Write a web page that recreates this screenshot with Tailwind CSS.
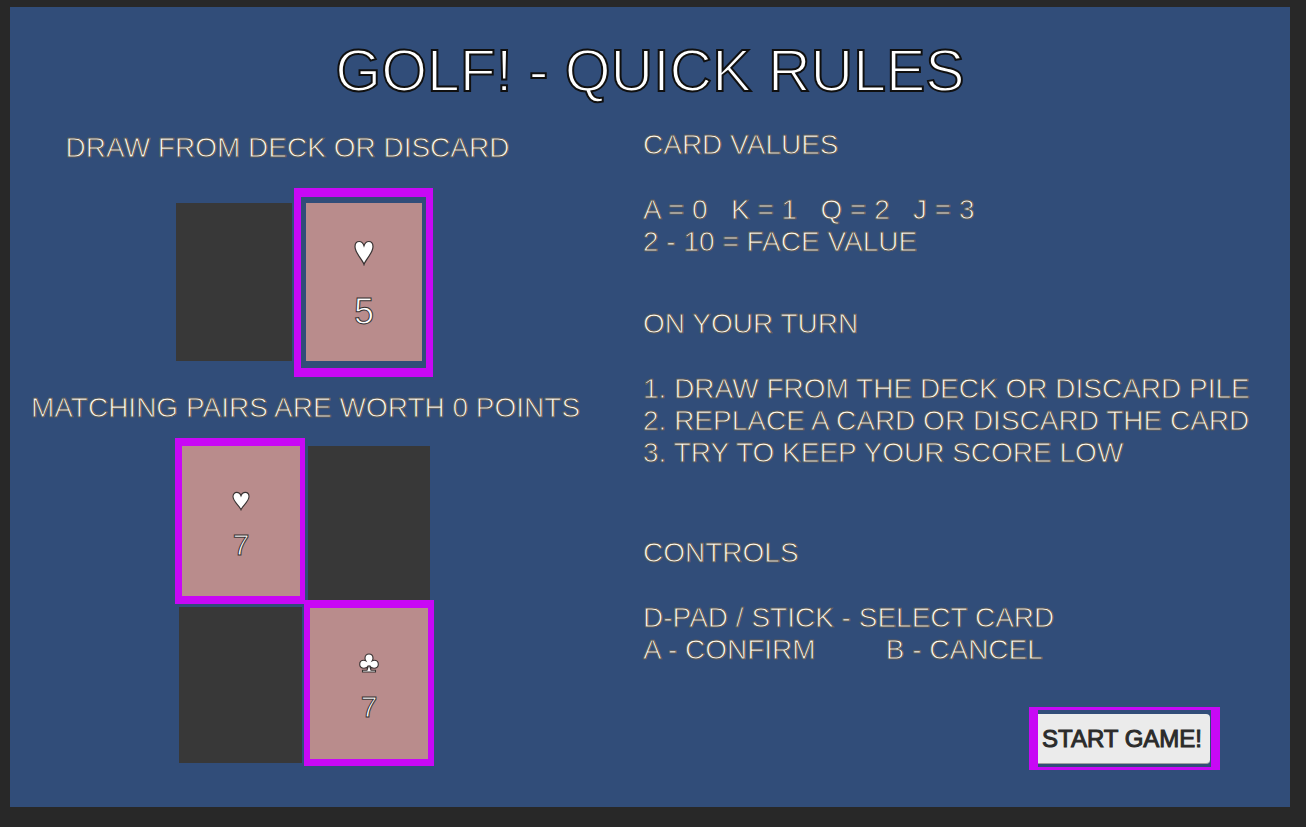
<!DOCTYPE html>
<html lang="en">
<head>
<meta charset="utf-8">
<meta name="viewport" content="width=device-width, initial-scale=1">
<title>Golf! - Quick Rules</title>
<script src="https://cdn.jsdelivr.net/npm/@tailwindcss/browser@4"></script>
</head>
<body class="flex min-h-screen flex-col bg-[#282828] pt-[7px] pr-4 pb-5 pl-[10px] font-['Liberation_Sans',Arial,sans-serif]">
<main class="flex grow flex-col bg-[#314d79] pt-8 text-[28px] leading-8 text-[#fffaf0] [-webkit-text-stroke:1px_#5c5a58]">
  <h1 class="text-center text-[59px] leading-16 text-white [-webkit-text-stroke:2px_#101010]">GOLF! - QUICK RULES</h1>
  <div class="grid grid-cols-[591fr_647fr] gap-x-[42px] pt-[26px]">
    <div class="flex flex-col items-center pt-[3px]">
      <h2 class="pr-9 whitespace-nowrap">DRAW FROM DECK OR DISCARD</h2>
      <div class="mt-6 flex items-start gap-[2px] pr-[2px]">
        <div class="mt-[15px] h-[158px] w-[116px] bg-[#383838]"></div>
        <div class="border-x-7 border-y-9 border-[#c808f5] pt-[6px] pr-1 pb-[7px] pl-[5px]">
          <div class="flex h-[158px] w-[116px] flex-col items-center bg-[#b98c8c] pt-[37px] text-white">
            <svg class="h-[26px] w-5" viewBox="0 0 20 26" fill="#fff" stroke="#383232" stroke-width="1.2" role="img" aria-label="Hearts"><path d="M10 24.500C8.500 19.500 1 13 1 6.700C1 3.500 2.900 1.500 5.200 1.500C7.600 1.500 9.200 3.200 10 5.800C10.800 3.200 12.400 1.500 14.800 1.500C17.100 1.500 19 3.500 19 6.700C19 13 11.500 19.500 10 24.500Z"/></svg>
            <span class="mt-[28px] text-[36px] leading-9 [-webkit-text-stroke:1px_#383232]">5</span>
          </div>
        </div>
      </div>
      <h2 class="mt-[15px] whitespace-nowrap">MATCHING PAIRS ARE WORTH 0 POINTS</h2>
      <div class="mt-[14px] flex items-start pr-[2px]">
        <div class="flex flex-col gap-[3px]">
          <div class="border-y-8 border-r-5 border-l-7 border-[#c808f5]">
            <div class="flex h-[150px] w-[118px] flex-col items-center bg-[#b98c8c] pt-[45px] text-white">
              <svg class="h-5 w-[18px]" viewBox="0 0 18 20" fill="#fff" stroke="#383232" stroke-width="1.1" role="img" aria-label="Hearts"><path d="M9 18.700C7.500 14.800 1 10.600 1 5.600C1 3 2.600 1.400 4.700 1.400C6.800 1.400 8.300 2.700 9 4.800C9.700 2.700 11.200 1.400 13.300 1.400C15.400 1.400 17 3 17 5.600C17 10.600 10.500 14.800 9 18.700Z"/></svg>
              <span class="mt-[18px] text-[30px] [-webkit-text-stroke:1px_#383232]">7</span>
            </div>
          </div>
          <div class="ml-1 h-[156px] w-[123px] bg-[#383838]"></div>
        </div>
        <div class="-ml-px flex flex-col pt-2">
          <div class="ml-1 h-[154px] w-[122px] bg-[#383838]"></div>
          <div class="border-x-6 border-t-8 border-b-7 border-[#c808f5]">
            <div class="flex h-[151px] w-[118px] flex-col items-center bg-[#b98c8c] pt-[45px] text-white">
              <svg class="h-5 w-5" viewBox="0 0 20 20" fill="#fff" stroke="#383232" stroke-width="1.1" role="img" aria-label="Clubs"><path d="M9.500 12.500C8.800 14.200 7.200 15.200 5 15.200C2.500 15.200.7 13.500.7 11.300C.7 9 2.500 7.300 4.800 7.300C5.600 7.300 6.200 7.500 6.800 7.800C6.300 7 6 6.100 6 5.200C6 2.800 7.700 1 10 1C12.300 1 14 2.800 14 5.200C14 6.100 13.700 7 13.200 7.800C13.800 7.500 14.400 7.300 15.200 7.300C17.500 7.300 19.300 9 19.300 11.300C19.300 13.500 17.500 15.200 15 15.200C12.800 15.200 11.200 14.200 10.500 12.500L12 17.200H16.500V19H3.500V17.200H8Z"/></svg>
              <span class="mt-[18px] text-[30px] [-webkit-text-stroke:1px_#383232]">7</span>
            </div>
          </div>
        </div>
      </div>
    </div>
    <div class="flex flex-col">
      <section>
        <h2>CARD VALUES</h2>
        <p class="mt-[33px] whitespace-pre">A = 0   K = 1   Q = 2   J = 3
2 - 10 = FACE VALUE</p>
      </section>
      <section class="mt-[50px]">
        <h2>ON YOUR TURN</h2>
        <p class="mt-[33px] whitespace-pre">1. DRAW FROM THE DECK OR DISCARD PILE
2. REPLACE A CARD OR DISCARD THE CARD
3. TRY TO KEEP YOUR SCORE LOW</p>
      </section>
      <section class="mt-[68px]">
        <h2>CONTROLS</h2>
        <p class="mt-[33px] whitespace-pre">D-PAD / STICK - SELECT CARD
A - CONFIRM         B - CANCEL</p>
      </section>
      <div class="mt-[41px] mr-[70px] self-end border-x-9 border-y-3 border-[#c808f5] pt-1 pr-px pb-[3px]">
        <button type="button" class="h-[50px] w-[172px] rounded-r-sm border-b border-[#a0a0a0] bg-[#ebebeb] pr-3 pl-1 text-center text-[24px] whitespace-nowrap text-[#2b2b2b] [-webkit-text-stroke:1px_#2b2b2b]">START GAME!</button>
      </div>
    </div>
  </div>
</main>
</body>
</html>
